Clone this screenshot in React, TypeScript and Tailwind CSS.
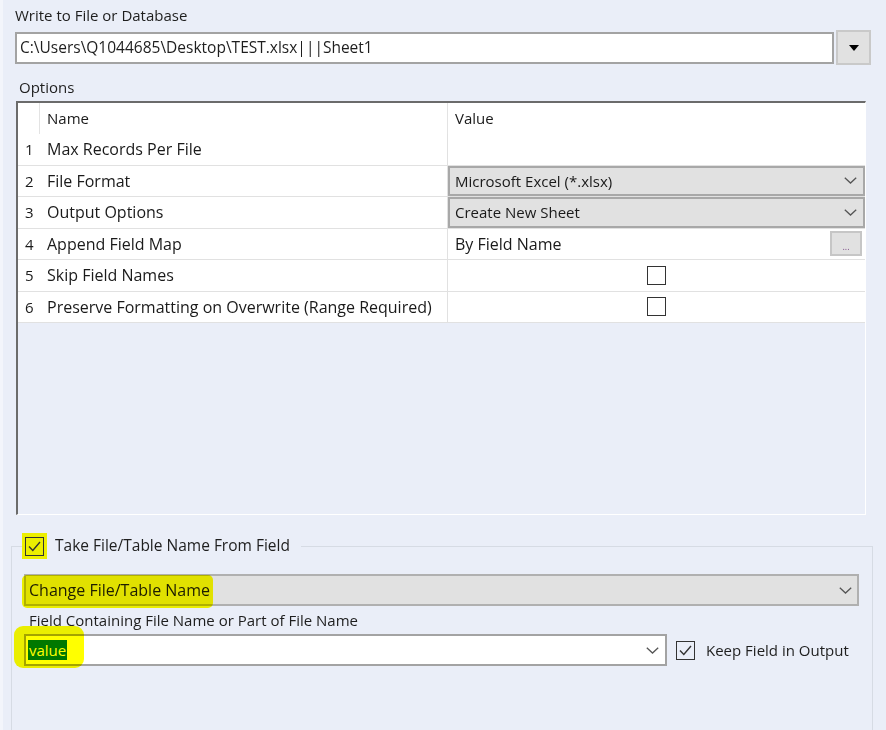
import React from "react";

function Chevron({ className = "" }: { className?: string }) {
  return (
    <svg width="13" height="7" viewBox="0 0 13 7" className={className}>
      <polyline points="0.8,0.8 6.5,6 12.2,0.8" fill="none" stroke="#555" strokeWidth="1.3" />
    </svg>
  );
}

function CheckBox({ checked = false }: { checked?: boolean }) {
  return (
    <div className="w-[19px] h-[19px] border border-[#333] flex items-center justify-center">
      {checked && (
        <svg width="17" height="17" viewBox="0 0 17 17">
          <polyline points="3,8.5 6.8,12.5 14,4" fill="none" stroke="#333" strokeWidth="1.4" />
        </svg>
      )}
    </div>
  );
}

const rows = [
  { n: 1, name: "Max Records Per File", kind: "blank" },
  { n: 2, name: "File Format", kind: "combo", value: "Microsoft Excel (*.xlsx)" },
  { n: 3, name: "Output Options", kind: "combo", value: "Create New Sheet" },
  { n: 4, name: "Append Field Map", kind: "button", value: "By Field Name" },
  { n: 5, name: "Skip Field Names", kind: "check" },
  { n: 6, name: "Preserve Formatting on Overwrite (Range Required)", kind: "check" },
];

export default function App() {
  return (
    <div className="relative w-[886px] h-[730px] overflow-hidden bg-[#eaeef8] border-l-[3px] border-[#f3f5fb] pl-[12px] pt-[5px] font-['Open_Sans',sans-serif] text-[15px] text-[#1e1e1e]">
      <div className="h-[20px] leading-[20px]">Write to File or Database</div>

      <div className="mt-[5px] flex items-start gap-[2px]">
        <div className="mt-[2px] h-[32px] w-[819px] bg-white border-2 border-[#a3a3a3] pl-[3px] flex items-center text-[15.5px]">
          C:\Users\Q1044685\Desktop\TEST.xlsx|||Sheet1
        </div>
        <div className="w-[35px] h-[35px] bg-[#e1e1e1] border-2 border-[#c9c9c9] flex items-center justify-center">
          <svg width="10" height="6" viewBox="0 0 10 6">
            <polygon points="0,0 10,0 5,6" fill="#000" />
          </svg>
        </div>
      </div>

      <div className="mt-[12px] pl-[4px] h-[20px] leading-[20px]">Options</div>

      {/* grid */}
      <div className="mt-[4px] ml-[1px] w-[850px] h-[414px] border-t-2 border-l-2 border-[#6b6b6b] border-r border-b border-r-white border-b-white text-[#1a1a1a]">
        <div className="flex h-[31px] bg-white">
          <div className="w-[22px] border-r border-[#e3e3e3]" />
          <div className="w-[408px] pl-[7px] border-r border-[#e3e3e3] flex items-center">Name</div>
          <div className="flex-1 pl-[7px] flex items-center">Value</div>
        </div>
        {rows.map((r) => (
          <div key={r.n} className="flex h-[31.5px] bg-white border-b border-[#e1e1e1]">
            <div className="w-[22px] pl-[7px] flex items-center">{r.n}</div>
            <div className="w-[408px] pl-[7px] border-r border-[#e1e1e1] flex items-center whitespace-nowrap text-[16px]">
              {r.name}
            </div>
            <div className="flex-1 flex items-center">
              {r.kind === "combo" && (
                <div className="w-full h-full bg-[#e1e1e1] border-2 border-[#a8a8a8] pl-[5px] pr-[6px] flex items-center justify-between">
                  <span>{r.value}</span>
                  <Chevron />
                </div>
              )}
              {r.kind === "button" && (
                <div className="w-full h-full pl-[7px] pr-[3px] flex items-center justify-between">
                  <span className="text-[16px]">{r.value}</span>
                  <div className="w-[32px] h-[25px] bg-[#e1e1e1] border-2 border-[#c6c6c6] flex items-end justify-center pb-[3px] text-[9px] leading-none text-[#7a4a86]">
                    ...
                  </div>
                </div>
              )}
              {r.kind === "check" && (
                <div className="w-full flex justify-center">
                  <CheckBox />
                </div>
              )}
            </div>
          </div>
        ))}
      </div>

      {/* group box */}
      <fieldset className="mt-[18px] -ml-[4px] w-[862px] h-[260px] border border-[#d6dbe4]">
        <legend className="ml-[10px] pr-[11px] flex items-center">
          <div className="w-[25px] h-[26px] bg-[#ecef00] flex items-center justify-center">
            <CheckBox checked />
          </div>
          <span className="ml-[8px] text-[15.5px]">Take File/Table Name From Field</span>
        </legend>

        <div className="pl-[12px]">
          <div className="relative mt-[15px] w-[835px] h-[32px] bg-[#e1e1e1] border-2 border-[#b0b0b0] pl-[3px] pr-[5px] flex items-center justify-between">
            <span className="text-[16px]">Change File/Table Name</span>
            <Chevron />
            <div className="absolute left-[-4px] top-[-1px] w-[191px] h-[33px] rounded-[5px] bg-[#ffff00] mix-blend-multiply" />
          </div>

          <div className="mt-[4px] pl-[5px] h-[20px] leading-[20px]">
            Field Containing File Name or Part of File Name
          </div>

          <div className="mt-[4px] flex items-center">
            <div className="relative w-[643px] h-[32px] bg-white border-2 border-[#a3a3a3] pl-[2px] pr-[6px] flex items-center justify-between">
              <span className="bg-[#0078d7] text-white h-[20px] leading-[20px] px-[1px]">value</span>
              <Chevron />
              <div className="absolute left-[-12px] top-[-10px] w-[70px] h-[42px] rounded-[9px] bg-[#ffff00] mix-blend-multiply" />
            </div>
            <div className="ml-[9px]">
              <CheckBox checked />
            </div>
            <span className="ml-[11px]">Keep Field in Output</span>
          </div>
        </div>
      </fieldset>
    </div>
  );
}
